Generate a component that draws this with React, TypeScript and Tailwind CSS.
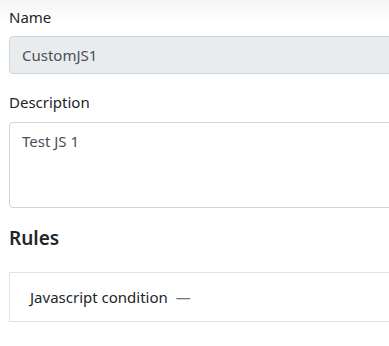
import React from 'react';

// Rule editor form — name, description, and rules list.
export default function App() {
  return (
    <div
      className="h-[346px] w-[389px] overflow-hidden bg-[linear-gradient(to_bottom,#f4f4f4_0px,#ffffff_22px)] text-[#212529]"
      style={{ fontFamily: '"Noto Sans", "Open Sans", sans-serif' }}
    >
      <div className="w-[520px] pl-[9px]">
        <label className="block pt-[6px] text-[15px] leading-[22px]">Name</label>
        <div className="mt-[8px] flex h-[38px] items-center rounded-[4px] border border-[#ced4da] bg-[#e9ecef] px-[12px] text-[15px] text-[#495057]">
          CustomJS1
        </div>

        <label className="mt-[17px] block text-[15px] leading-[22px]">Description</label>
        <div className="mt-[9px] h-[86px] rounded-[4px] border border-[#ced4da] bg-white px-[12px] pt-[7px] text-[15px] leading-[22px] text-[#495057]">
          Test JS 1
        </div>

        <h2 className="mt-[17px] text-[19px] font-semibold leading-[26px]">Rules</h2>

        <div className="mt-[21px] flex h-[50px] items-center border border-[#dee2e6] pl-[20px] text-[15px]">
          <span>Javascript condition</span>
          <span className="ml-[8px] text-[#6c757d]">—</span>
        </div>
      </div>
    </div>
  );
}
